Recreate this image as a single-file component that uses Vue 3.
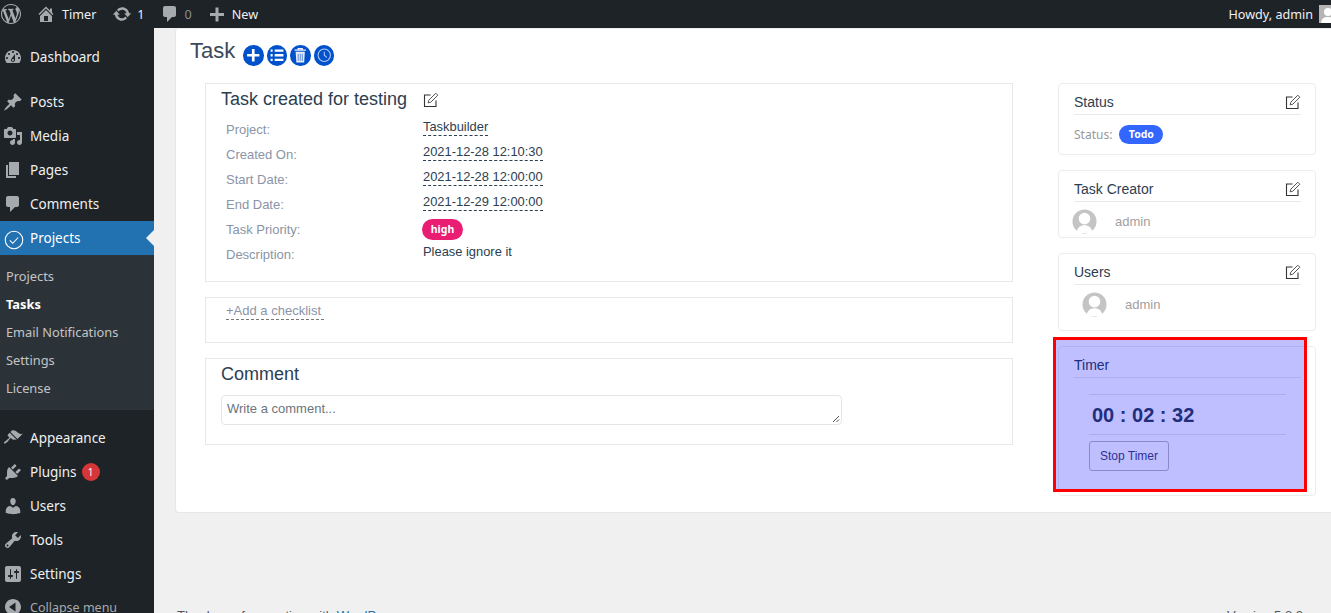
<script setup>
const ic = {
  wp: 'M20 10c0-5.51-4.49-10-10-10C4.48 0 0 4.49 0 10c0 5.52 4.48 10 10 10 5.51 0 10-4.48 10-10zM7.78 15.37L4.37 6.22c.55-.02 1.17-.08 1.17-.08.5-.06.44-1.13-.06-1.11 0 0-1.45.11-2.37.11-.18 0-.37 0-.58-.01C4.12 2.69 6.87 1.11 10 1.11c2.33 0 4.45.87 6.05 2.34-.68-.11-1.65.39-1.65 1.58 0 .74.45 1.36.9 2.1.35.61.55 1.36.55 2.46 0 1.49-1.4 5-1.4 5l-3.03-8.37c.54-.02.82-.17.82-.17.5-.05.44-1.25-.06-1.22 0 0-1.44.12-2.38.12-.87 0-2.33-.12-2.33-.12-.5-.03-.56 1.2-.06 1.22l.92.08 1.26 3.41zM17.41 10c.24-.64.74-1.87.43-4.25.7 1.29 1.05 2.71 1.05 4.25 0 3.29-1.73 6.24-4.4 7.78.97-2.59 1.94-5.2 2.92-7.78zM6.1 18.09C3.12 16.65 1.11 13.53 1.11 10c0-1.3.23-2.48.72-3.59C3.25 10.3 4.67 14.2 6.1 18.09zm4.03-6.63l2.58 6.98c-.86.29-1.76.45-2.71.45-.79 0-1.57-.11-2.29-.33.81-2.38 1.62-4.74 2.42-7.1z',
  home: 'M16 8.5l1.53 1.53-1.06 1.06L10 4.62l-6.47 6.47-1.06-1.06L10 2.5l4 4v-2h2v4zm-6-2.46l6 5.99V18H4v-5.97zM12 17v-5H8v5h4z',
  update: 'M10.2 3.28c3.53 0 6.43 2.61 6.92 6h2.08l-3.5 4-3.5-4h2.32c-.45-1.97-2.21-3.45-4.32-3.45-1.45 0-2.73.71-3.54 1.78L4.95 5.66C6.23 4.2 8.11 3.28 10.2 3.28zm-.4 13.44c-3.52 0-6.43-2.61-6.92-6H.8l3.5-4c1.17 1.33 2.33 2.67 3.5 4H5.48c.45 1.97 2.21 3.45 4.32 3.45 1.45 0 2.73-.71 3.54-1.78l1.71 1.95c-1.28 1.46-3.15 2.38-5.25 2.38z',
  comment: 'M5 2h9c1.1 0 2 .9 2 2v7c0 1.1-.9 2-2 2h-2l-5 5v-5H5c-1.1 0-2-.9-2-2V4c0-1.1.9-2 2-2z',
  plus: 'M17 9v3h-5.5v5.5h-3V12H3V9h5.5V3.500h3V9z',
  dashboard: 'M3.76 16h12.48c1.1-1.37 1.76-3.11 1.76-5 0-4.42-3.58-8-8-8s-8 3.58-8 8c0 1.89.66 3.63 1.76 5zM10 4c.55 0 1 .45 1 1s-.45 1-1 1-1-.45-1-1 .45-1 1-1zM6 6c.55 0 1 .45 1 1s-.45 1-1 1-1-.45-1-1 .45-1 1-1zm8 0c.55 0 1 .45 1 1s-.45 1-1 1-1-.45-1-1 .45-1 1-1zm-5.37 5.55L12 7v6c0 1.1-.9 2-2 2s-2-.9-2-2c0-.57.24-1.08.63-1.45zM4 10c.55 0 1 .45 1 1s-.45 1-1 1-1-.45-1-1 .45-1 1-1zm12 0c.55 0 1 .45 1 1s-.45 1-1 1-1-.45-1-1 .45-1 1-1zm-5 3c0-.55-.45-1-1-1s-1 .45-1 1 .45 1 1 1 1-.45 1-1z',
  pin: 'M10.44 3.02l1.82-1.82 6.36 6.35-1.83 1.82c-1.05-.68-2.48-.57-3.41.36l-.75.75c-.92.93-1.04 2.35-.35 3.41l-1.83 1.82-2.41-2.41-2.8 2.79c-.42.42-3.38 2.71-3.8 2.29s1.86-3.39 2.28-3.81l2.79-2.79L4.1 9.36l1.83-1.82c1.05.69 2.48.57 3.4-.36l.75-.75c.93-.92 1.05-2.35.36-3.41z',
  media: 'M13 11V4c0-.55-.45-1-1-1h-1.67L9 1H5L3.67 3H2c-.55 0-1 .45-1 1v7c0 .55.45 1 1 1h10c.55 0 1-.45 1-1zM7 4.500c1.38 0 2.500 1.120 2.500 2.500S8.380 9.500 7 9.500 4.500 8.380 4.500 7 5.620 4.500 7 4.500zM14 6h5v10.500c0 1.380-1.120 2.500-2.500 2.500S14 17.880 14 16.500s1.120-2.500 2.500-2.500c.17 0 .34.02.5.05V9h-3V6zm-4 8.050V13h2v3.500c0 1.380-1.120 2.500-2.500 2.500S7 17.880 7 16.500 8.120 14 9.500 14c.17 0 .34.02.5.05z',
  page: 'M6 15V2h10v13H6zm-1 1h8v2H3V5h2v11z',
  brush: 'M14.480 11.060L7.410 3.990l1.500-1.500c.5-.56 2.300-.47 3.510.32 1.210.8 1.430 1.280 2.910 2.100 1.180.64 2.450 1.260 4.450.85zm-.71.71L6.700 4.700 4.930 6.470c-.39.39-.39 1.020 0 1.410l1.060 1.060c.39.39.39 1.030 0 1.420-.6.6-1.430 1.110-2.210 1.690-.35.26-.7.53-1.010.84C1.430 13.230.4 14.820 1.010 15.430c.61.6 2.200-.42 3.540-1.760.3-.31.58-.66.84-1.010.58-.78 1.090-1.610 1.690-2.210.39-.39 1.020-.39 1.410 0l1.060 1.060c.39.39 1.020.39 1.410 0z',
  plugin: 'M13.110 4.360L9.870 7.600 8 5.730l3.240-3.240c.35-.34 1.050-.2 1.560.32.52.51.66 1.210.31 1.550zm-8 1.770l.91-1.120 9.010 9.010-1.190.84c-.71.71-2.630 1.160-3.820 1.160H6.140L4.900 17.260c-.59.59-1.540.59-2.120 0-.59-.58-.59-1.530 0-2.120l1.240-1.240v-3.880c0-1.130.4-3.190 1.090-3.890zm7.260 3.970l3.240-3.240c.34-.35 1.040-.21 1.550.31.52.51.66 1.210.31 1.550l-3.240 3.250z',
  users: 'M10 9.250c-2.270 0-2.730-3.440-2.730-3.440C7 4.020 7.820 2 9.970 2c2.160 0 2.980 2.020 2.710 3.810 0 0-.41 3.440-2.680 3.440zm0 2.570L12.720 10c2.390 0 4.520 2.330 4.520 4.530v2.490s-3.650 1.130-7.240 1.130c-3.650 0-7.240-1.130-7.240-1.130v-2.490c0-2.250 1.940-4.480 4.470-4.480z',
  tools: 'M16.680 9.770c-1.340 1.340-3.300 1.670-4.950.99l-5.410 6.520c-.99.99-2.590.99-3.580 0s-.99-2.590 0-3.570l6.520-5.420c-.68-1.650-.35-3.610.99-4.950 1.280-1.280 3.120-1.620 4.720-1.060l-2.890 2.890 2.820 2.820 2.860-2.870c.53 1.580.18 3.390-1.080 4.650zM3.810 16.210c.4.39 1.040.39 1.430 0 .4-.4.4-1.040 0-1.430-.39-.4-1.030-.4-1.430 0-.39.39-.39 1.030 0 1.430z',
  settings: 'M18 16V4c0-1.100-.9-2-2-2H4c-1.100 0-2 .9-2 2v12c0 1.100.9 2 2 2h12c1.100 0 2-.9 2-2zM8 11h1c.55 0 1 .45 1 1s-.45 1-1 1H8v1.500c0 .28-.22.5-.5.5s-.5-.22-.5-.5V13H6c-.55 0-1-.45-1-1s.45-1 1-1h1V5.500c0-.28.22-.5.5-.5s.5.22.5.5V11zm5-2h-1c-.55 0-1-.45-1-1s.45-1 1-1h1V5.500c0-.28.22-.5.5-.5s.5.22.5.5V7h1c.55 0 1 .45 1 1s-.45 1-1 1h-1v5.500c0 .28-.22.5-.5.5s-.5-.22-.5-.5V9z',
  collapse: 'M18 10c0-4.420-3.580-8-8-8s-8 3.580-8 8 3.580 8 8 8 8-3.580 8-8zm-5.500-4.500v9L6 10z',
}
const menuTop = [{ label: 'Dashboard', icon: 'dashboard' }]
const menuMid = [
  { label: 'Posts', icon: 'pin' },
  { label: 'Media', icon: 'media' },
  { label: 'Pages', icon: 'page' },
  { label: 'Comments', icon: 'comment' },
]
const sub = ['Projects', 'Tasks', 'Email Notifications', 'Settings', 'License']
const menuLow = [
  { label: 'Appearance', icon: 'brush' },
  { label: 'Plugins', icon: 'plugin', badge: '1' },
  { label: 'Users', icon: 'users' },
  { label: 'Tools', icon: 'tools' },
  { label: 'Settings', icon: 'settings' },
]
const fields = [
  { k: 'Project:', v: 'Taskbuilder', dash: true },
  { k: 'Created On:', v: '2021-12-28 12:10:30', dash: true },
  { k: 'Start Date:', v: '2021-12-28 12:00:00', dash: true },
  { k: 'End Date:', v: '2021-12-29 12:00:00', dash: true },
  { k: 'Task Priority:', pill: 'high' },
  { k: 'Description:', v: 'Please ignore it' },
]
</script>

<template>
  <div class="page">
    <header class="bar">
      <svg class="bar-wp" viewBox="0 0 20 20"><path :d="ic.wp" /></svg>
      <svg class="bar-ic home" viewBox="0 0 20 20"><path :d="ic.home" /></svg>
      <span class="bar-t">Timer</span>
      <svg class="bar-ic upd" viewBox="0 0 20 20"><path :d="ic.update" /></svg>
      <span class="bar-t">1</span>
      <svg class="bar-ic cmt" viewBox="0 0 20 20"><path :d="ic.comment" /></svg>
      <span class="bar-t dim">0</span>
      <svg class="bar-ic nw" viewBox="0 0 20 20"><path :d="ic.plus" /></svg>
      <span class="bar-t">New</span>
      <span class="bar-t howdy">Howdy, admin</span>
      <svg class="bar-av" viewBox="0 0 18 18"><rect width="18" height="18" fill="#b5b5b5" /><circle cx="9" cy="7" r="4" class="w" /><path d="M2 18c.5-4.500 3-6 7-6s6.500 1.500 7 6z" class="w" /></svg>
    </header>

    <div class="body">
      <nav class="side">
        <div class="menu first">
          <div v-for="m in menuTop" :key="m.label" class="item">
            <svg class="item-ic" viewBox="0 0 20 20"><path :d="ic[m.icon]" /></svg>
            <span>{{ m.label }}</span>
          </div>
        </div>
        <div class="menu second">
          <div v-for="m in menuMid" :key="m.label" class="item">
            <svg class="item-ic" viewBox="0 0 20 20"><path :d="ic[m.icon]" /></svg>
            <span>{{ m.label }}</span>
          </div>
          <div class="item current">
            <svg class="item-ic cur" viewBox="0 0 24 24">
              <circle cx="12" cy="12" r="10.500" fill="none" stroke="#fff" stroke-width="1.300" />
              <path d="M7 12.500l3.500 3.500L17 9" fill="none" stroke="#fff" stroke-width="1.300" />
            </svg>
            <span>Projects</span>
          </div>
          <div class="submenu">
            <div v-for="s in sub" :key="s" class="sub" :class="{ on: s === 'Tasks' }">{{ s }}</div>
          </div>
        </div>
        <div class="menu third">
          <div v-for="m in menuLow" :key="m.label" class="item">
            <svg class="item-ic" viewBox="0 0 20 20"><path :d="ic[m.icon]" /></svg>
            <span>{{ m.label }}</span>
            <b v-if="m.badge" class="badge">{{ m.badge }}</b>
          </div>
          <div class="item collapse">
            <svg class="item-ic" viewBox="0 0 20 20"><path :d="ic.collapse" /></svg>
            <span>Collapse menu</span>
          </div>
        </div>
      </nav>

      <main class="main">
        <section class="sheet">
          <div class="head">
            <h1>Task</h1>
            <div class="tools">
              <span class="tool"><svg viewBox="0 0 20 20"><path d="M10 4v12M4 10h12" stroke="#fff" stroke-width="2.600" /></svg></span>
              <span class="tool"><svg viewBox="0 0 20 20"><path d="M7.500 5.500H16M7.500 10H16M7.500 14.500H16M3.500 5.500h2M3.500 10h2M3.500 14.500h2" stroke="#fff" stroke-width="2.300" /></svg></span>
              <span class="tool"><svg viewBox="0 0 20 20"><path d="M4.500 5h11M8 5V3.500h4V5" stroke="#eef" stroke-width="1.200" fill="none" /><path d="M5.500 6.500h9l-.7 10.500H6.200z" fill="#e8ecf5" /><path d="M8 8.500v7M10 8.500v7M12 8.500v7" stroke="#0052cc" stroke-width=".6" /></svg></span>
              <span class="tool"><svg viewBox="0 0 20 20"><circle cx="10" cy="10" r="6" fill="none" stroke="#b8cdf0" stroke-width="1" /><path d="M10 6.500V10l2.500 2" fill="none" stroke="#b8cdf0" stroke-width="1" /></svg></span>
            </div>
          </div>

          <div class="cols">
            <div class="left">
              <article class="box details">
                <div class="title-row">
                  <h2>Task created for testing</h2>
                  <svg class="edit" viewBox="0 0 16 16"><use href="#edit-glyph" /></svg>
                </div>
                <div class="rows">
                  <div v-for="f in fields" :key="f.k" class="row">
                    <span class="key">{{ f.k }}</span>
                    <span v-if="f.pill" class="val"><i class="pill">{{ f.pill }}</i></span>
                    <span v-else class="val"><a :class="{ dash: f.dash }">{{ f.v }}</a></span>
                  </div>
                </div>
              </article>
              <article class="box check">
                <a class="add">+Add a checklist</a>
              </article>
              <article class="box comment">
                <h2>Comment</h2>
                <div class="ta">Write a comment...
                  <svg class="grip" viewBox="0 0 8 8"><path d="M7 1L1 7M7 4.500L4.500 7" stroke="#555" stroke-width="1" /></svg>
                </div>
              </article>
            </div>

            <aside class="right">
              <article class="rcard c1">
                <div class="rhead"><span>Status</span><svg class="edit" viewBox="0 0 16 16"><use href="#edit-glyph" /></svg></div>
                <div class="status"><span>Status:</span><b class="todo">Todo</b></div>
              </article>
              <article class="rcard c2">
                <div class="rhead"><span>Task Creator</span><svg class="edit" viewBox="0 0 16 16"><use href="#edit-glyph" /></svg></div>
                <div class="person">
                  <svg class="av" viewBox="0 0 26 26"><use href="#av-glyph" /></svg>
                  <span>admin</span>
                </div>
              </article>
              <article class="rcard c3">
                <div class="rhead"><span>Users</span><svg class="edit" viewBox="0 0 16 16"><use href="#edit-glyph" /></svg></div>
                <div class="person indent">
                  <svg class="av" viewBox="0 0 26 26"><use href="#av-glyph" /></svg>
                  <span>admin</span>
                </div>
              </article>
              <article class="rcard c4">
                <div class="rhead"><span>Timer</span></div>
                <div class="timer">
                  <div class="clock">00 : 02 : 32</div>
                  <button class="stop" type="button">Stop Timer</button>
                </div>
                <div class="highlight"></div>
              </article>
            </aside>
          </div>
        </section>
        <footer class="foot">
          <span>Thank you for creating with <a>WordPress</a>.</span>
          <span class="ver">Version 5.8.2</span>
        </footer>
      </main>
    </div>

    <svg class="defs" width="0" height="0">
      <defs>
        <g id="edit-glyph">
          <path d="M7.500 3H1.500v11.500H13V8.500" fill="none" stroke="#333" stroke-width="1.100" />
          <path d="M5.800 8.200L12.800 1.200l2 2-7 7-2.700.7z" fill="none" stroke="#555" stroke-width="1" />
        </g>
        <g id="av-glyph">
          <circle cx="13" cy="13" r="12.500" fill="#c4c4c4" />
          <circle cx="13" cy="10" r="6" fill="#fff" />
          <path d="M4.500 25c1-5.500 4-8 8.500-8s7.500 2.500 8.500 8z" fill="#fff" />
        </g>
      </defs>
    </svg>
  </div>
</template>

<style>
html, body { margin: 0; background: #f0f0f1; }
</style>

<style scoped>
.page { width: 1331px; height: 613px; overflow: hidden; background: #f0f0f1; display: flex; flex-direction: column; font-family: "Liberation Sans", Arial, sans-serif; position: relative; }
.defs { position: absolute; }

.bar { height: 28px; flex: none; background: #1d2327; color: #f0f0f1; display: flex; align-items: center; font-family: "Noto Sans", sans-serif; font-size: 12.600px; }
.bar svg path { fill: #a7aaad; }
.bar-wp { width: 20px; height: 20px; margin-left: 1px; flex: none; }
.bar-ic { width: 20px; height: 20px; flex: none; }
.home { margin-left: 15px; margin-right: 6px; }
.upd { margin-left: 16px; margin-right: 5px; }
.cmt { margin-left: 15px; margin-right: 5px; }
.nw { margin-left: 15px; margin-right: 5px; }
.dim { color: #8c8f94; }
.howdy { margin-left: auto; margin-right: 6px; }
.bar-av { width: 18px; height: 18px; flex: none; margin-right: -6px; }
.bar-av .w { fill: #fff !important; }

.body { flex: 1; display: flex; min-height: 0; }
.side { width: 154px; flex: none; background: #1d2327; color: #f0f0f1; font-family: "Noto Sans", sans-serif; font-size: 13.500px; padding-top: 12px; }
.menu.second { margin-top: 11px; }
.menu.third { margin-top: 11px; }
.item { height: 34px; display: flex; align-items: center; padding-left: 3px; position: relative; }
.item-ic { width: 20px; height: 20px; flex: none; margin-right: 7px; }
.item-ic path { fill: #a7aaad; }
.item.current { background: #2271b1; color: #fff; }
.item.current::after { content: ""; position: absolute; right: 0; top: 9px; border: 8px solid transparent; border-right-color: #f0f0f1; border-left-width: 0; }
.item-ic.cur { margin: 3px 6px 0 1px; }
.item-ic.cur path { fill: none; }
.submenu { background: #2c3338; padding: 7px 0; height: 141px; }
.sub { height: 28px; line-height: 28px; padding-left: 6px; font-size: 12.800px; color: #c3c4c7; }
.sub.on { color: #fff; font-weight: 700; }
.badge { width: 18px; height: 18px; margin-left: 5px; border-radius: 50%; background: #d63638; color: #fff; font-size: 10px; font-weight: 400; text-align: center; line-height: 18px; }
.collapse { color: #a7aaad; font-size: 12.500px; margin-top: -1px; }

.main { flex: 1; min-width: 0; padding-left: 21px; }
.sheet { height: 485px; box-sizing: border-box; background: #fff; border-radius: 4px 0 0 4px; border: 1px solid #e6e6e6; border-width: 0 0 1px 1px; border-top: 1px solid #eee; }
.head { display: flex; align-items: flex-start; padding: 9px 0 0 14px; height: 45px; box-sizing: border-box; color: #2c3e50; }
h1 { margin: 0; font-size: 22px; font-weight: 400; line-height: 26px; color: #3a4a5a; }
.tools { display: flex; gap: 3px; margin: 7px 0 0 8px; }
.tool { width: 20.500px; height: 20.500px; border-radius: 50%; background: #0052cc; display: flex; }
.tool svg { width: 100%; height: 100%; }

.cols { display: flex; padding: 9px 0 0 29px; }
.left { width: 808px; flex: none; display: flex; flex-direction: column; gap: 15px; }
.box { border: 1px solid #e8e8e8; box-sizing: border-box; padding: 0 15px; }
h2 { margin: 0; font-size: 18px; font-weight: 400; color: #2c3e50; line-height: 30px; }
.details { height: 199px; }
.title-row { display: flex; align-items: center; height: 30px; }
.edit { width: 16px; height: 16px; flex: none; }
.title-row .edit { margin-left: 16px; margin-top: 2px; }
.rows { padding: 3px 0 0 5px; }
.row { display: grid; grid-template-columns: 197px 1fr; height: 25px; font-size: 13px; line-height: 25px; }
.key { color: #8a94a6; }
.val { color: #2c3e50; position: relative; top: -3px; font-size: 12.900px; }
.dash { border-bottom: 1px dashed #2c3e50; padding-bottom: 1px; }
.pill { display: inline-block; height: 21px; width: 41px; margin-left: -1px; border-radius: 11px; background: #e91e73; color: #fff; font: 700 10.500px/20px "Noto Sans", sans-serif; text-align: center; vertical-align: top; margin-top: 5px; }
.check { height: 46px; }
.add { display: inline-block; margin-left: 5px; padding-right: 3px; font-size: 13px; line-height: 17px; color: #8a94a6; border-bottom: 1px dashed #777; margin-top: 4px; }
.comment { height: 87px; }
.ta { position: relative; height: 30px; width: 621px; box-sizing: border-box; border: 1px solid #e5e5e5; border-radius: 4px; padding: 4px 5px; font-size: 13px; line-height: 18px; color: #6c757d; margin-top: 6px; }
.grip { position: absolute; right: 1px; bottom: 1px; width: 8px; height: 8px; }

.right { width: 258px; margin-left: 45px; flex: none; display: flex; flex-direction: column; gap: 15px; }
.rcard { border: 1px solid #ececec; border-radius: 4px; box-sizing: border-box; padding: 0 14px 0 15px; position: relative; background: #fff; }
.c1 { height: 72px; }
.c2 { height: 68px; }
.c3 { height: 78px; }
.c4 { height: 150px; }
.rhead { display: flex; justify-content: space-between; align-items: center; height: 31px; padding-top: 6px; box-sizing: border-box; border-bottom: 1px solid #eaeaea; font-size: 14px; color: #2c3e50; }
.status { display: flex; align-items: center; gap: 7px; height: 39px; font: 12px "Noto Sans", sans-serif; color: #999; }
.todo { width: 44px; height: 19px; border-radius: 10px; background: #3366ff; color: #fff; text-align: center; font-size: 10.500px; line-height: 18px; }
.person { display: flex; align-items: center; gap: 18px; margin-left: -2px; height: 38px; font-size: 13px; color: #a0a0a0; }
.person.indent { margin-left: 8px; }
.av { width: 25px; height: 25px; flex: none; }
.timer { margin: 16px 15px 0; }
.clock { border-top: 1px solid #e6e6e6; border-bottom: 1px solid #e6e6e6; height: 41px; box-sizing: border-box; padding-left: 3px; font-size: 20px; font-weight: 700; line-height: 41px; color: #2c3e50; }
.stop { display: block; margin-top: 6px; width: 80px; height: 30px; padding: 0; background: #fff; border: 1px solid #b9b9b9; border-radius: 3px; font: 12px "Liberation Sans", sans-serif; color: #3c4370; }
.highlight { position: absolute; left: -6px; top: -10px; width: 254px; height: 155px; box-sizing: border-box; border: 3px solid #f00; background: rgba(0, 0, 255, .25); }

.foot { display: flex; justify-content: space-between; padding: 93px 28px 0 2px; font-size: 13px; line-height: 20px; color: #50575e; }
.foot a { color: #2271b1; }
</style>
